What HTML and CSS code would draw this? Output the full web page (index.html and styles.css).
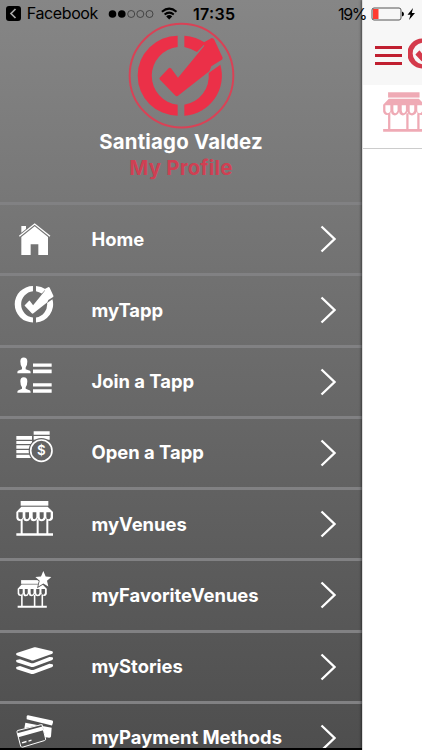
FILE: index.html
```html
<!DOCTYPE html>
<html lang="en">
<head>
<meta charset="utf-8">
<title>Menu</title>
<link rel="stylesheet" href="styles.css">
</head>
<body>
<svg width="0" height="0" class="defs">
  <defs>
    <g id="tapp">
      <path d="M173 61A120 120 0 0 0 173 301V268A87 87 0 0 1 173 95Z"/>
      <path d="M193 61Q229 64 257 83L231 110Q213 99 193 95Z"/>
      <path d="M301 148A120 120 0 0 1 193 301V268A87 87 0 0 0 266 173Z"/>
      <path d="M119 187L146 159Q149 155 153 159L174 187L253 91L248 83L275 68Q281 68 283 73L308 127Q308 133 303 135L274 153L268 168L176 240Q170 246 165 240L120 193Q117 190 119 187Z"/>
    </g>
    <g id="shop">
      <path d="M62 63H145V77H62Z"/>
      <path d="M64 80H143L159 96V115Q157 123 150 123Q140 123 138 114Q134 124 125 124Q115 124 113 114Q109 124 101 124Q92 124 91 114Q88 124 80 124Q70 124 70 114Q67 123 59 123Q51 123 49 114V96Z"/>
      <path d="M62 118H68V161H62ZM110 118H116V161H110ZM139 118H145V161H139ZM49 160H159V167H49Z"/>
      <path class="hole" d="M55 97H68V113Q65 118 61 118Q55 117 55 111ZM76 97H87V112Q85 118 81 118Q76 118 76 111ZM98 97H109V112Q107 118 103 118Q98 118 98 111ZM119 97H131V112Q129 118 125 118Q119 118 119 111ZM139 97H152V112Q150 118 146 118Q139 118 139 111Z"/>
    </g>
  </defs>
</svg>
<div class="screen">
  <nav class="drawer">
    <header class="profile">
      <svg class="avatar" viewBox="24 20 321 321">
        <circle class="ring" cx="184.500" cy="181" r="155.500"/>
        <use href="#tapp"/>
      </svg>
      <div class="name">Santiago Valdez</div>
      <div class="link">My Profile</div>
    </header>
    <ul class="menu">
      <li class="row">
        <svg class="icon" viewBox="42 39 126 150"><path d="M64 111L104 79L144 111V165H115V133H92V165H64ZM64 78H78V87L64 98Z"/><path class="line" d="M58 109L104 72L150 109"/></svg>
        <span class="label">Home</span><svg class="arrow" viewBox="0 0 16 28"><path d="M1.500 1.500L14.500 14L1.500 26.500"/></svg>
      </li>
      <li class="row">
        <svg class="icon" viewBox="42 252.750 126 150"><use href="#tapp" transform="translate(20 231) scale(.456)"/></svg>
        <span class="label">myTapp</span><svg class="arrow" viewBox="0 0 16 28"><path d="M1.500 1.500L14.500 14L1.500 26.500"/></svg>
      </li>
      <li class="row">
        <svg class="icon" viewBox="42 46.500 126 150">
          <g id="person"><path d="M66 84Q61 77 61 66Q61 54 71 54Q82 54 82 66Q82 77 77 84V89L90 94Q92 95 92 101H52Q52 95 54 94L66 89Z"/><path d="M99 72H155V82H99ZM99 90H155V101H99Z"/></g>
          <use href="#person" y="59"/>
        </svg>
        <span class="label">Join a Tapp</span><svg class="arrow" viewBox="0 0 16 28"><path d="M1.500 1.500L14.500 14L1.500 26.500"/></svg>
      </li>
      <li class="row">
        <svg class="icon" viewBox="42 258 126 150">
          <path d="M101 274H149V284H101ZM101 288H149V299H101ZM49 288H96V299H49ZM49 303H96V312H49ZM49 316H93V326H49ZM49 330H91V340H49ZM49 344H94V354H49Z"/>
          <circle class="hole" cx="124" cy="332" r="38"/><circle class="coin" cx="124" cy="332" r="32"/>
          <text x="124" y="346" class="dollar">$</text>
        </svg>
        <span class="label">Open a Tapp</span><svg class="arrow" viewBox="0 0 16 28"><path d="M1.500 1.500L14.500 14L1.500 26.500"/></svg>
      </li>
      <li class="row">
        <svg class="icon venues" viewBox="42 54 126 150"><use href="#shop"/></svg>
        <span class="label">myVenues</span><svg class="arrow" viewBox="0 0 16 28"><path d="M1.500 1.500L14.500 14L1.500 26.500"/></svg>
      </li>
      <li class="row">
        <svg class="icon favorites" viewBox="42 267.750 126 150">
          <use href="#shop" transform="translate(14 251) scale(.795)"/>
          <path class="star" d="M130 274L137 290L154 292L141 303L145 320L130 311L115 320L119 303L106 292L123 290Z"/>
        </svg>
        <span class="label">myFavoriteVenues</span><svg class="arrow" viewBox="0 0 16 28"><path d="M1.500 1.500L14.500 14L1.500 26.500"/></svg>
      </li>
      <li class="row">
        <svg class="icon" viewBox="42 60 126 150">
          <path d="M50 99L103 82Q108 81 113 83L157 94Q161 97 157 101L102 121Q97 123 92 120L50 106Q46 102 50 99Z"/>
          <path d="M49 120L60 118L92 129Q97 131 102 129L148 111L158 112Q161 117 157 120L102 140Q97 142 92 140L50 127Q47 123 49 120ZM49 141L60 138L92 149Q97 151 102 149L148 131L158 133Q161 138 157 141L102 161Q97 163 92 161L50 148Q47 144 49 141Z"/>
        </svg>
        <span class="label">myStories</span><svg class="arrow" viewBox="0 0 16 28"><path d="M1.500 1.500L14.500 14L1.500 26.500"/></svg>
      </li>
      <li class="row">
        <svg class="icon" viewBox="42 273.500 126 150">
          <path d="M84 286L157 302Q160 304 159 308L156 317L80 298L80 289Q81 286 84 286ZM76 309L155 324L153 350Q151 355 144 353L135 352L127 313L73 325Z"/>
          <path class="card" d="M53 332L122 315Q126 314 127 318L137 358Q137 361 134 362L68 382Q64 383 62 379L51 337Q50 333 53 332Z"/>
          <path d="M52 340L127 320L130 331L55 352ZM65 367L79 363L80 367L67 371ZM85 362L94 359L95 363L86 366Z"/>
        </svg>
        <span class="label">myPayment Methods</span><svg class="arrow" viewBox="0 0 16 28"><path d="M1.500 1.500L14.500 14L1.500 26.500"/></svg>
      </li>
    </ul>
  </nav>
  <main class="page">
    <div class="topbar">
      <span class="burger"><i></i><i></i><i></i></span>
      <svg class="brand" viewBox="60 57 252 248"><use href="#tapp"/></svg>
    </div>
    <div class="tab"><svg class="tabicon" viewBox="46 61 116 108"><use href="#shop"/></svg></div>
  </main>
  <div class="status">
    <svg viewBox="0 0 422 28" width="422" height="28">
      <rect x="6" y="6" width="15" height="15" rx="3"/>
      <path class="back" d="M15.500 9L11 13.500L15.500 18"/>
      <circle cx="112.500" cy="14" r="3.800"/><circle cx="121.800" cy="14" r="3.800"/>
      <g class="dots"><circle cx="131.200" cy="14" r="3.500"/><circle cx="140.300" cy="14" r="3.500"/><circle cx="149.500" cy="14" r="3.500"/></g>
      <g class="wifi"><path d="M161.900 11.700Q169.200 5.500 176.500 11.700"/><path d="M164.600 14.600Q169.200 10.700 173.800 14.600"/></g>
      <path d="M166.200 16.400Q169.200 13.700 172.200 16.400L169.200 19.400Z"/>
      <rect class="battery" x="372" y="8" width="29" height="12" rx="2"/>
      <rect class="charge" x="373" y="9" width="5.500" height="10"/>
      <path d="M402 11.500Q404 12 404 14Q404 16 402 16.500ZM413 8L407.500 14.700H410.500L409 20L415 12.900H411.800Z"/>
      <text x="26.800" y="19.300" textLength="71.500">Facebook</text>
      <text x="193" y="19.600" textLength="42" class="time">17:35</text>
      <text x="338" y="19.600" textLength="29.500">19%</text>
    </svg>
  </div>
</div>
</body>
</html>
```
FILE: styles.css
```css
* { box-sizing: border-box; }
body { margin: 0; font-family: Inter, "Liberation Sans", sans-serif; }
.defs { position: absolute; }
.screen { position: relative; display: flex; width: 422px; height: 750px; overflow: hidden; background: #fff; }
.drawer {
  width: 362px; height: 750px; overflow: hidden; color: #fff;
  background: linear-gradient(#868686, #4e4e4e 748px);
  border-bottom: 2px solid #000;
  flex: none;
}
.profile { height: 202px; padding-top: 21.700px; text-align: center; font-weight: 700; font-size: 20.400px; }
.avatar { display: block; width: 107px; height: 107px; margin: 0 auto 0 127.800px; fill: #eb3048; }
.ring { fill: none; stroke: #d94256; stroke-width: 6; }
.name { line-height: 26px; letter-spacing: .2px; }
.link { line-height: 26px; color: #cf4053; letter-spacing: .2px; }
.menu { list-style: none; margin: 0; padding: 0; }
.row { display: flex; align-items: center; height: 71.250px; padding-left: 14px; border-top: 3px solid #818183; }
.icon { width: 42px; height: 50px; margin-top: -3px; flex: none; fill: #fff; --hole: #646464; }
.venues { --hole: #606060; }
.favorites { --hole: #5a5a5a; }
.tabicon { --hole: #fff; }
.hole { fill: var(--hole, #686868); }
.line { fill: none; stroke: #fff; stroke-width: 4; }
.coin { fill: none; stroke: #fff; stroke-width: 5; }
.dollar { font-size: 40px; font-weight: 600; text-anchor: middle; }
.star { stroke: #5a5a5a; stroke-width: 5; paint-order: stroke; }
.card { fill: #505050; stroke: #fff; stroke-width: 3; }
.label { width: 264px; margin-top: -1px; padding-left: 35.500px; flex: none; font-weight: 700; font-size: 18.400px; white-space: nowrap; }
.arrow { width: 16px; height: 28px; fill: none; stroke: #fff; stroke-width: 2.300; }
.page { flex: 1; min-width: 0; overflow: hidden; border-left: 1px solid #ddd; box-shadow: 0 0 3px rgba(0,0,0,.8); background: #fff; }
.topbar { height: 85px; display: flex; gap: 6px; padding: 38px 0 0 12px; background: #f7f7f7; }
.burger { display: flex; flex-direction: column; gap: 5px; padding-top: 8px; flex: none; }
.burger i { width: 27px; height: 3px; background: #c01f30; }
.brand { width: 32px; height: 31px; flex: none; fill: #d43a4b; }
.tab { height: 64px; padding: 6px 0 0 19px; border-bottom: 1px solid #ccc; }
.tabicon { display: block; width: 44px; height: 42px; fill: #efaab5; }
.status { position: absolute; left: 0; top: 0; height: 28px; color: #000; font-size: 16px; }
.back { fill: none; stroke: #aaa; stroke-width: 1.700; }
.dots { fill: none; stroke: #333; stroke-width: .8; }
.wifi { fill: none; stroke: #000; stroke-width: 2; }
.battery { fill: none; stroke: #555; stroke-width: 1; }
.charge { fill: #ff3b30; }
.time { font-weight: 600; }
```
